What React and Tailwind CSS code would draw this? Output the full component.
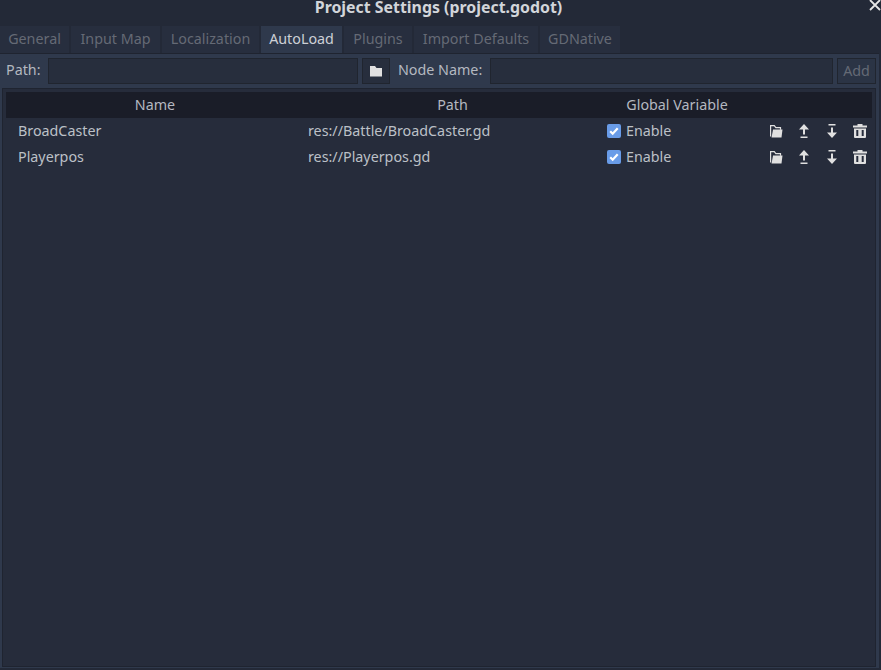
import React from 'react'

const tabs = [
    { name: 'General', w: 'w-[69px]' },
    { name: 'Input Map', w: 'w-[89px]' },
    { name: 'Localization', w: 'w-[97px]' },
    { name: 'AutoLoad', w: 'w-[81px]', active: true },
    { name: 'Plugins', w: 'w-[68px]' },
    { name: 'Import Defaults', w: 'w-[124px]' },
    { name: 'GDNative', w: 'w-[80px]' },
]

const rows = [
    { name: 'BroadCaster', path: 'res://Battle/BroadCaster.gd' },
    { name: 'Playerpos', path: 'res://Playerpos.gd' },
]

const FolderIcon = () => (
    <svg width="16" height="16" viewBox="0 0 16 16" fill="#e0e0e0">
        <path d="M2 3h5l1.500 2H14v8.500H2z" />
    </svg>
)

const FolderOpenIcon = () => (
    <svg width="16" height="16" viewBox="0 0 16 16">
        <path d="M2.600 13.500V2.700h3.700l1.500 2h4.700v2" fill="none" stroke="#e0e0e0" strokeWidth="1.200" />
        <path d="M5 6.500h9.500L13.500 14.500H3.500z" fill="#e0e0e0" />
    </svg>
)

const UpIcon = () => (
    <svg width="16" height="16" viewBox="0 0 16 16" fill="#e0e0e0">
        <path d="M8 1l5 5.500H9v5H7v-5H3zM4.500 13.500h7V15h-7z" />
    </svg>
)

const DownIcon = () => (
    <svg width="16" height="16" viewBox="0 0 16 16" fill="#e0e0e0">
        <path d="M4.500 1h7v1.500h-7zM7 4.500h2v5h4L8 15 3 9.500h4z" />
    </svg>
)

const TrashIcon = () => (
    <svg width="16" height="16" viewBox="0 0 16 16" fill="#e0e0e0">
        <path fillRule="evenodd" d="M5.500 1h5v1.500H15v2H1v-2h4.500zM2 5.500h12V14a1 1 0 0 1-1 1H3a1 1 0 0 1-1-1zM4.300 7v6h2V7zm5.400 0v6h2V7z" />
    </svg>
)

const Row = ({ name, path }) => (
    <div className="flex h-[26px] items-center text-[#bcc0c7]">
        <div className="w-[302px] truncate pb-[1px] pl-3">{name}</div>
        <div className="w-[299px] truncate pb-[1px]">{path}</div>
        <div className="flex w-[161px] items-center">
            <span className="flex h-[14px] w-[14px] items-center justify-center rounded-[2px] bg-[#699ce8]">
                <svg width="12" height="12" viewBox="0 0 12 12" fill="none" stroke="#fff" strokeWidth="2.200">
                    <path d="M2.200 6.200l2.500 2.500 5-5.500" />
                </svg>
            </span>
            <span className="ml-[5px] pb-[1px]">Enable</span>
        </div>
        <div className="flex gap-3 pb-[1px]">
            <FolderOpenIcon />
            <UpIcon />
            <DownIcon />
            <TrashIcon />
        </div>
    </div>
)

export default function App() {
    return (
        <div className="flex h-[670px] w-[881px] flex-col overflow-hidden bg-[#232937] font-['Noto_Sans',sans-serif] text-[14.3px]">
            {/* Title */}
            <div className="relative h-[26px] shrink-0">
                <div className="pr-[4px] text-center text-[15.9px] font-bold leading-[14px] text-[#d2d5da]">
                    Project Settings (project.godot)
                </div>
                <svg className="absolute right-0 top-0" width="12" height="12" viewBox="0 0 12 12" stroke="#e6e6e6" strokeWidth="1.800">
                    <path d="M1 0l10 10M11 0L1 10" />
                </svg>
            </div>

            {/* Tabs */}
            <div className="flex h-[27px] shrink-0 gap-[2px]">
                {tabs.map((tab) => (
                    <div
                        key={tab.name}
                        className={`flex items-center justify-center pb-[2px] ${tab.w} ${tab.active ? 'bg-[#2f394c] text-[#cdd0d6]' : 'bg-[#272e3e] text-[#656a75]'}`}
                    >
                        {tab.name}
                    </div>
                ))}
            </div>

            {/* Panel */}
            <div className="mb-[2px] mr-[2px] flex min-h-0 flex-1 flex-col border-t border-[#1f2430] bg-[#2f394c] pb-[1px] pl-[2px] pr-[3px]">
                <div className="flex h-[34px] shrink-0 gap-[4px] pl-1 pt-1 text-[#b4b8c0]">
                    <span className="w-[38px] pt-[1px]">Path:</span>
                    <div className="h-[26px] w-[310px] border border-[#20252f] bg-[#272e3d]" />
                    <div className="flex h-[26px] w-[28px] items-center justify-center border border-[#20252f] bg-[#272e3d]">
                        <FolderIcon />
                    </div>
                    <span className="ml-[4px] w-[88px] pt-[1px]">Node Name:</span>
                    <div className="h-[26px] w-[343px] border border-[#20252f] bg-[#272e3d]" />
                    <div className="flex h-[26px] w-[39px] items-center justify-center border border-[#20252f] bg-[#2b3445] pb-[1px] text-[#646a75]">
                        Add
                    </div>
                </div>

                {/* Tree */}
                <div className="flex min-h-0 flex-1 flex-col border border-[#1f2430] bg-[#262c3b] px-[3px] pt-[3px]">
                    <div className="flex h-[26px] shrink-0 items-center bg-[#1a1d28] pb-[1px] text-[#b4b8c0]">
                        <div className="w-[298px] text-center">Name</div>
                        <div className="w-[297px] text-center">Path</div>
                        <div className="w-[152px] text-center">Global Variable</div>
                    </div>
                    {rows.map((row) => (
                        <Row key={row.name} {...row} />
                    ))}
                </div>
            </div>
        </div>
    )
}
